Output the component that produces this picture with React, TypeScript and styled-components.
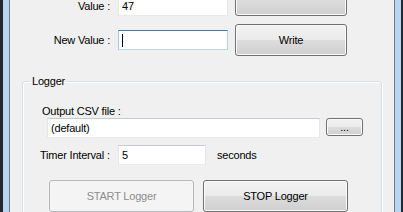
import styled, { createGlobalStyle } from "styled-components";

const GlobalStyle = createGlobalStyle`
  html, body {
    margin: 0;
    padding: 0;
    height: 100%;
    overflow: hidden;
    background: #f0f0f0;
  }
  #root {
    height: 100%;
  }
`;

const Window = styled.div`
  display: flex;
  height: 100vh;
  font-family: "Liberation Sans", Arial, sans-serif;
  font-size: 11px;
  letter-spacing: -0.2px;
  color: #000;
`;

const Frame = styled.div<{ $side: "left" | "right" }>`
  flex: none;
  box-sizing: border-box;
  width: ${(p) => (p.$side === "left" ? 10 : 9)}px;
  background: #b9d6f0;
  border-style: solid;
  border-width: ${(p) => (p.$side === "left" ? "0 1px 0 3px" : "0 2px 0 1px")};
  border-color: ${(p) =>
    p.$side === "left" ? "#23272e #6b7c8e #23272e #23272e" : "#23272e #23272e #23272e #6b7c8e"};
`;

const Body = styled.div`
  flex: 1;
  display: flex;
  flex-direction: column;
  overflow: hidden;
  background: #f0f0f0;
`;

const Row = styled.div<{ $top: number; $align: string }>`
  display: flex;
  align-items: ${(p) => p.$align};
  height: 32px;
  margin-top: ${(p) => p.$top}px;
  flex: none;
`;

const FieldLabel = styled.div`
  width: 100px;
  margin-right: 8px;
  text-align: right;
  line-height: 20px;
  white-space: nowrap;
`;

const TextBox = styled.div<{ $w: number; $focused?: boolean }>`
  position: relative;
  box-sizing: border-box;
  width: ${(p) => p.$w}px;
  height: 20px;
  padding: 0 3px;
  line-height: 18px;
  background: #fff;
  border: 1px solid;
  border-color: ${(p) =>
    p.$focused ? "#3d7bad #b5cfe7 #b7d9ed #a4c9e3" : "#c6cbd2 #e3e6ea #e8ebef #e3e6ea"};
  white-space: nowrap;
  flex: none;
`;

const Caret = styled.span`
  display: inline-block;
  width: 1px;
  height: 13px;
  background: #000;
  vertical-align: middle;
  margin-top: -2px;
`;

const Button = styled.div<{ $w: number; $h: number; $disabled?: boolean }>`
  box-sizing: border-box;
  width: ${(p) => p.$w}px;
  height: ${(p) => p.$h}px;
  flex: none;
  display: flex;
  align-items: center;
  justify-content: center;
  border-radius: 3px;
  border: 1px solid ${(p) => (p.$disabled ? "#b7babd" : "#707070")};
  color: ${(p) => (p.$disabled ? "#8d8d8d" : "#000")};
  background: ${(p) =>
    p.$disabled
      ? "#f4f4f4"
      : "linear-gradient(#f2f2f2 0%, #ebebeb 50%, #dddddd 50%, #cfcfcf 100%)"};
  box-shadow: inset 0 0 0 1px ${(p) => (p.$disabled ? "#f4f4f4" : "#fbfbfb")};
  white-space: nowrap;
`;

const ButtonGap = styled.div`
  width: 7px;
  flex: none;
`;

const Group = styled.fieldset`
  box-sizing: border-box;
  width: 360px;
  min-width: 0;
  margin: 19px 0 0 12px;
  padding: 0 0 20px 0;
  border: 1px solid #d5dfe5;
  border-radius: 3px;
  box-shadow: inset 1px 1px 0 #fff, 1px 1px 0 #fff;
  flex: none;
`;

const Legend = styled.legend`
  margin-left: 7px;
  padding: 0 2px;
  line-height: 13px;
`;

const Caption = styled.div`
  margin: 17px 0 0 19px;
  line-height: 13px;
`;

const FileRow = styled.div`
  display: flex;
  align-items: flex-start;
  gap: 6px;
  margin-left: 24px;
`;

const TimerRow = styled.div`
  display: flex;
  align-items: center;
  margin: 7px 0 0 17px;
`;

const TimerLabel = styled.div`
  width: 78px;
  white-space: nowrap;
`;

const Unit = styled.div`
  margin-left: 11px;
`;

const ActionRow = styled.div`
  display: flex;
  gap: 9px;
  margin: 15px 0 0 26px;
`;

export default function App() {
  return (
    <>
      <GlobalStyle />
      <Window>
        <Frame $side="left" />
        <Body>
          <Row $top={-16} $align="flex-end">
            <FieldLabel>Value :</FieldLabel>
            <TextBox $w={110}>47</TextBox>
            <ButtonGap />
            <Button $w={112} $h={32}></Button>
          </Row>
          <Row $top={8} $align="center">
            <FieldLabel>New Value :</FieldLabel>
            <TextBox $w={110} $focused>
              <Caret />
            </TextBox>
            <ButtonGap />
            <Button $w={112} $h={32}>Write</Button>
          </Row>
          <Group>
            <Legend>Logger</Legend>
            <Caption>Output CSV file :</Caption>
            <FileRow>
              <TextBox $w={273}>(default)</TextBox>
              <Button $w={37} $h={18}>...</Button>
            </FileRow>
            <TimerRow>
              <TimerLabel>Timer Interval :</TimerLabel>
              <TextBox $w={88}>5</TextBox>
              <Unit>seconds</Unit>
            </TimerRow>
            <ActionRow>
              <Button $w={145} $h={32} $disabled>START Logger</Button>
              <Button $w={145} $h={32}>STOP Logger</Button>
            </ActionRow>
          </Group>
        </Body>
        <Frame $side="right" />
      </Window>
    </>
  );
}
